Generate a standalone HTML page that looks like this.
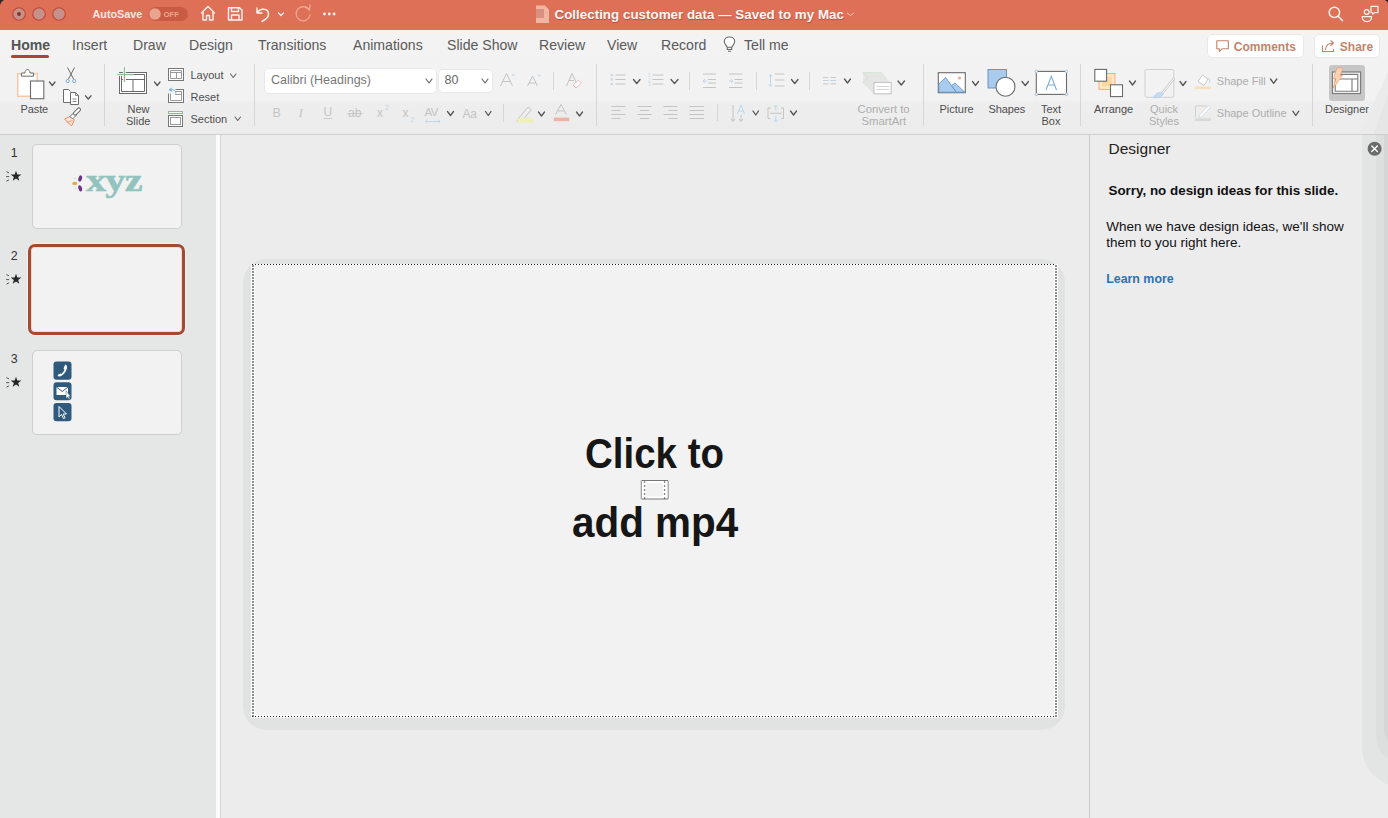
<!DOCTYPE html>
<html><head><meta charset="utf-8">
<style>
*{margin:0;padding:0;box-sizing:border-box}
html,body{width:1388px;height:818px;overflow:hidden;background:#ececec;font-family:"Liberation Sans",sans-serif}
.a{position:absolute}
.t{position:absolute;white-space:nowrap;line-height:1}
#title{left:0;top:0;width:1388px;height:30px;background:#de7058}
#strip{left:0;top:30px;width:1388px;height:3px;background:#fdefe9}
#ribbon{left:0;top:33px;width:1388px;height:101px;background:linear-gradient(#f3f3f3 0,#f2f2f2 67px,#eeeeee 69px,#ececec 101px)}
#rbb{left:0;top:134px;width:1388px;height:1px;background:#cfcfcf}
#pane{left:0;top:135px;width:216px;height:683px;background:#e5e7e6}
#split{left:216px;top:135px;width:5px;height:683px;background:#fbfbfb;border-right:1px solid #d4d4d4}
#canvas{left:221px;top:135px;width:868px;height:683px;background:#ececec}
#designer{left:1089px;top:135px;width:299px;height:683px;background:#ececec;border-left:1px solid #cbcbcb}
.tab{font-size:14.1px;color:#5a5a5a;top:37.6px}
.lbl{font-size:11px;color:#4e4e4e}
.dis{color:#adadad}
.sep{position:absolute;width:1px;background:#d6d6d6}
.chev{position:absolute;width:7px;height:5px}
</style></head><body>
<div id="title" class="a"></div>
<div id="strip" class="a"></div>
<div id="ribbon" class="a"></div>
<div id="rbb" class="a"></div>
<div id="pane" class="a"></div>
<div id="split" class="a"></div>
<div id="canvas" class="a"></div>
<div id="designer" class="a"></div>


<!-- title bar -->
<svg class="a" style="left:0;top:0" width="1388" height="30">
 <path d="M0 0 L4 0 Q0.8 1.5 0 5 Z" fill="#2a2a2a"/><path d="M1388 0 L1385 0 Q1387.5 1 1388 3 Z" fill="#1a1a1a"/>
 <g stroke="#c2442e" stroke-width="1.1" fill="#c6918a">
  <circle cx="19" cy="14" r="6.3"/><circle cx="39" cy="14" r="6.3"/><circle cx="59" cy="14" r="6.3"/>
 </g>
 <circle cx="19" cy="14" r="1.9" fill="#7e3328"/>
 <rect x="148.5" y="7" width="39.5" height="14" rx="7" fill="#c95a43"/>
 <circle cx="155" cy="14" r="6" fill="#eba58f" stroke="#d0624c" stroke-width="0.6"/>
 <g fill="none" stroke="#fff3ee" stroke-width="1.4" stroke-linejoin="round" stroke-linecap="round">
  <path d="M201.5 13 L208 6.6 L214.5 13 M203 11.5 V20 H206.5 V15.5 H209.5 V20 H213 V11.5"/>
  <path d="M228.5 7.8 H239.5 L242 10.3 V20 H228.5 Z M231.5 7.8 V11.5 H238.5 V7.8 M231.5 20 V15 H239 V20"/>
  <path d="M257 8 V13 H262 M257.5 12.5 C260 8 268 8 268.5 13.5 C269 17 265 20 262 21.5"/>
  <path d="M278.5 13 L281 15.5 L283.5 13" stroke-width="1.2"/>
 </g>
 <g fill="none" stroke="#f0a893" stroke-width="1.3" stroke-linecap="round">
  <path d="M309 10 A7 7 0 1 0 310 15"/><path d="M305.5 6.5 L309.5 9.5 L310 5"/>
 </g>
 <g fill="#fff3ee"><circle cx="324.5" cy="14" r="1.4"/><circle cx="329.3" cy="14" r="1.4"/><circle cx="334.1" cy="14" r="1.4"/></g>
 <g>
  <path d="M536 5.5 H545 L549 9.5 V23 H536 Z" fill="#f2b5a2"/>
  <rect x="536" y="9" width="8" height="9" fill="#d99080"/>
 </g>
 <path d="M847 13 L850.5 15.5 L854 13" fill="none" stroke="#f7c7b9" stroke-width="1"/>
 <g fill="none" stroke="#fff3ee" stroke-width="1.5" stroke-linecap="round">
  <circle cx="1334.4" cy="12.4" r="5.2"/><path d="M1338.2 16.3 L1342.4 20.6"/>
 </g>
 <g fill="none" stroke="#fff3ee" stroke-width="1.2" stroke-linejoin="round">
  <circle cx="1366.7" cy="12" r="2.4"/>
  <path d="M1362.2 16.6 H1371.6 C1371.6 20 1369.5 21.6 1366.9 21.6 C1364.3 21.6 1362.2 20 1362.2 16.6 Z"/>
  <path d="M1371 6.3 H1378 V12.6 H1374.6 L1372.6 14.2 V12.6 H1371 Z"/>
 </g>
</svg>
<div class="t" style="left:92.5px;top:9px;font-size:10.8px;font-weight:bold;color:#fde8e0">AutoSave</div>
<div class="t" style="left:163.5px;top:10.5px;font-size:7.8px;font-weight:bold;color:#efa590">OFF</div>
<div class="t" style="left:554.5px;top:8px;font-size:13.4px;font-weight:bold;color:#fff8f5;text-shadow:0.5px 1px 1px rgba(120,40,20,.45)">Collecting customer data — Saved to my Mac</div>



<!-- right edge bands -->
<div class="a" style="left:1362px;top:135px;width:60px;height:652px;background:#e3e4e4;border-radius:0 0 0 40px"></div>
<div class="a" style="left:1376px;top:135px;width:40px;height:630px;background:#dddede;border-radius:0 0 0 30px"></div>
<div class="a" style="left:1384px;top:135px;width:20px;height:614px;background:#d6d6d6;border-radius:0 0 0 20px"></div>

<!-- thumbnails -->
<div class="t" style="left:10.8px;top:146.6px;font-size:12.4px;color:#333">1</div>
<div class="t" style="left:10.8px;top:249.6px;font-size:12.4px;color:#333">2</div>
<div class="t" style="left:10.8px;top:352.6px;font-size:12.4px;color:#333">3</div>
<svg class="a" style="left:0;top:135px" width="216" height="300">
 <g id="st">
  <path d="M16.00 35.70 L17.32 39.48 L21.33 39.57 L18.14 42.00 L19.29 45.83 L16.00 43.55 L12.71 45.83 L13.86 42.00 L10.67 39.57 L14.68 39.48 Z" fill="#262626"/>
  <path d="M6.4 36.6 L9 37.9 M6.1 41.6 H9.2 M6.4 46.2 L9 44.8" stroke="#444" stroke-width="0.9" fill="none"/>
 </g>
 <use href="#st" y="103"/>
 <use href="#st" y="206"/>
</svg>
<div class="a" style="left:31.5px;top:144.3px;width:150px;height:84.5px;background:#f2f2f2;border:1px solid #cfcfcf;border-radius:5px"></div>
<div class="a" style="left:28.2px;top:244.2px;width:156.5px;height:91px;background:#f2f2f2;border:3px solid #a44a34;border-radius:7px;box-shadow:inset 0 0 0 1px #fcd6c6,0 0 0 1px rgba(245,245,245,.6)"></div>
<div class="a" style="left:31.5px;top:350.3px;width:150px;height:84.5px;background:#f2f2f2;border:1px solid #cfcfcf;border-radius:5px"></div>
<!-- xyz logo -->
<div class="t" style="left:86px;top:164.8px;font-family:'Liberation Serif',serif;font-weight:bold;font-size:31px;color:#93c3bf;letter-spacing:-0.6px;-webkit-text-stroke:0.5px #93c3bf;transform-origin:0 0;transform:scaleX(1.3)">xyz</div>
<svg class="a" style="left:70px;top:173px" width="16" height="22">
 <ellipse cx="10.2" cy="5.5" rx="1.8" ry="3.2" fill="#6a3585" transform="rotate(15 10.2 5.5)"/>
 <ellipse cx="10.2" cy="15.3" rx="1.8" ry="3.2" fill="#6a3585" transform="rotate(-15 10.2 15.3)"/>
 <ellipse cx="4.8" cy="10.4" rx="2.6" ry="1.6" fill="#e8a93c"/>
 <circle cx="5.2" cy="5.5" r="0.8" fill="#b8d8d4"/><circle cx="5.2" cy="15.5" r="0.8" fill="#b8d8d4"/>
</svg>
<!-- slide 3 icons -->
<svg class="a" style="left:53px;top:361px" width="20" height="62">
 <rect x="0.5" y="0.5" width="18" height="18.3" rx="3" fill="#2f5a7e"/>
 <rect x="0.5" y="21.3" width="18" height="18" rx="3" fill="#2f5a7e"/>
 <rect x="0.5" y="42" width="18" height="18.3" rx="3" fill="#2f5a7e"/>
 <path d="M12.5 3.5 C14.5 4.5 14.5 7 13 10 C11 13.5 8.5 15.5 5.5 15.5 L4.5 14 L7.5 12.5 L8.5 13 C10 11.5 11 10 11.5 8.5 L10.5 7.5 L12 4 Z" fill="#fff"/>
 <rect x="3.5" y="26" width="11.5" height="8" fill="#fff"/>
 <path d="M3.5 26 L9.25 30.5 L15 26" fill="none" stroke="#2f5a7e" stroke-width="1"/>
 <path d="M13 30 L13 37.5 L14.5 36 L16 38.5 L17 38 L15.8 35.5 L17.8 35.5 Z" fill="#fff" stroke="#2f5a7e" stroke-width="0.5"/>
 <path d="M6 45.5 L6 56 L8.5 53.5 L10.5 57.5 L12 56.8 L10.2 53 L13.5 53 Z" fill="none" stroke="#fff" stroke-width="1"/>
</svg>

<!-- slide -->
<div class="a" style="left:243px;top:259px;width:822px;height:470.5px;background:#e1e2e2;border-radius:24px"></div>
<svg class="a" style="left:250px;top:263px" width="810" height="456">
 <rect x="1" y="1" width="807" height="454" fill="#f2f2f2"/>
 <rect x="1" y="1" width="4" height="454" fill="#fff"/>
 <rect x="804" y="1" width="4" height="454" fill="#fff"/>
 <rect x="1" y="1" width="807" height="1" fill="#fff"/>
 <rect x="1" y="452" width="807" height="2" fill="#fff"/>
 <path d="M3 2 V454 M806 2 V454" stroke="#8f8f8f" stroke-width="2" stroke-dasharray="2 1"/>
 <path d="M2 1.5 H806 M2 453.5 H806" stroke="#1e1e1e" stroke-width="1" stroke-dasharray="1 2"/>
</svg>
<div class="t" style="left:585px;top:431.5px;font-size:43px;font-weight:bold;color:#161616;transform-origin:0 0;transform:scaleX(0.895)">Click to</div>
<div class="t" style="left:571.6px;top:501px;font-size:43px;font-weight:bold;color:#161616;transform-origin:0 0;transform:scaleX(0.94)">add mp4</div>
<svg class="a" style="left:640px;top:479px" width="30" height="22">
 <rect x="1" y="1" width="27.5" height="19.3" fill="#fff"/>
 <rect x="5.5" y="4" width="17.5" height="13.5" fill="#f2f2f2"/>
 <path d="M1.5 1.5 H28" stroke="#777" stroke-width="1"/>
 <path d="M1.5 20 H28" stroke="#777" stroke-width="1"/>
 <path d="M1.3 1.5 V20 M28.2 1.5 V20" stroke="#9d9d9d" stroke-width="1.2"/>
 <g fill="#555"><rect x="3.9" y="2.3" width="1.3" height="1.4"/><rect x="3.9" y="6.3" width="1.3" height="1.4"/><rect x="3.9" y="10.3" width="1.3" height="1.4"/><rect x="3.9" y="14.3" width="1.3" height="1.4"/><rect x="3.9" y="18.4" width="1.3" height="1.4"/>
 <rect x="23.9" y="2.3" width="1.3" height="1.4"/><rect x="23.9" y="6.3" width="1.3" height="1.4"/><rect x="23.9" y="10.3" width="1.3" height="1.4"/><rect x="23.9" y="14.3" width="1.3" height="1.4"/><rect x="23.9" y="18.4" width="1.3" height="1.4"/></g>
</svg>

<!-- designer pane -->
<div class="t" style="left:1108.5px;top:141.3px;font-size:15.5px;color:#222">Designer</div>
<div class="t" style="left:1108.5px;top:184.1px;font-size:13.4px;font-weight:bold;color:#111">Sorry, no design ideas for this slide.</div>
<div class="t" style="left:1106.2px;top:219.6px;font-size:13.5px;color:#111">When we have design ideas, we'll show</div>
<div class="t" style="left:1106.2px;top:235.8px;font-size:13.5px;color:#111">them to you right here.</div>
<div class="t" style="left:1106.2px;top:273.2px;font-size:12.4px;font-weight:bold;color:#2b72b5">Learn more</div>
<svg class="a" style="left:1366px;top:140px" width="18" height="18">
 <circle cx="8.6" cy="8.7" r="7" fill="#6b6b6b"/>
 <path d="M5.8 5.9 L11.4 11.5 M11.4 5.9 L5.8 11.5" stroke="#fff" stroke-width="1.4" stroke-linecap="round"/>
</svg>

<svg class="a" style="left:1340px;top:60px" width="48" height="74">
 <path d="M48 12 C40 30 28 55 20 74 H48 Z" fill="#ebebeb"/>
 <path d="M48 34 C44 46 38 62 34 74 H48 Z" fill="#e6e6e6"/>
</svg>
<!-- ribbon separators -->
<div class="sep" style="left:104px;top:64px;height:62px"></div>
<div class="sep" style="left:254px;top:64px;height:62px"></div>
<div class="sep" style="left:596px;top:64px;height:62px"></div>
<div class="sep" style="left:923px;top:64px;height:62px"></div>
<div class="sep" style="left:1080px;top:64px;height:62px"></div>
<div class="sep" style="left:1312px;top:64px;height:62px"></div>
<div class="sep" style="left:553px;top:72px;height:18px"></div>
<div class="sep" style="left:503px;top:104px;height:18px"></div>
<div class="sep" style="left:689px;top:72px;height:18px"></div>
<div class="sep" style="left:756px;top:72px;height:18px"></div>
<div class="sep" style="left:809px;top:72px;height:18px"></div>
<div class="sep" style="left:717px;top:104px;height:17px"></div>

<!-- labels -->
<div class="t lbl" style="left:20.5px;top:103.5px;letter-spacing:-0.1px">Paste</div>
<div class="t lbl" style="left:127.5px;top:103.5px">New</div>
<div class="t lbl" style="left:126px;top:115.5px">Slide</div>
<div class="t lbl" style="left:190.5px;top:69.9px">Layout</div>
<div class="t lbl" style="left:190.5px;top:91.8px">Reset</div>
<div class="t lbl" style="left:190.5px;top:113.7px">Section</div>
<div class="t lbl dis" style="left:857.5px;top:103.5px;font-size:11.3px">Convert to</div>
<div class="t lbl dis" style="left:861.5px;top:115.5px;font-size:11.3px">SmartArt</div>
<div class="t lbl" style="left:939.5px;top:103.5px">Picture</div>
<div class="t lbl" style="left:988.5px;top:103.5px;letter-spacing:-0.1px">Shapes</div>
<div class="t lbl" style="left:1041px;top:103.5px">Text</div>
<div class="t lbl" style="left:1041.5px;top:115.5px">Box</div>
<div class="t lbl" style="left:1094px;top:103.5px;color:#4a4a4a">Arrange</div>
<div class="t lbl dis" style="left:1150px;top:103.5px">Quick</div>
<div class="t lbl dis" style="left:1149px;top:115.5px">Styles</div>
<div class="t lbl dis" style="left:1216.8px;top:75.7px">Shape Fill</div>
<div class="t lbl dis" style="left:1216.8px;top:107.5px">Shape Outline</div>
<div class="t lbl" style="left:1325px;top:103.5px;color:#4f4f4f">Designer</div>

<!-- font boxes -->
<div class="a" style="left:264.5px;top:69px;width:171.5px;height:23.5px;background:#fff;border-radius:4px;box-shadow:0 0 0 0.5px #e0e0e0"></div>
<div class="a" style="left:439px;top:69.5px;width:53px;height:22.5px;background:#fff;border-radius:4px;box-shadow:0 0 0 0.5px #e0e0e0"></div>
<div class="t" style="left:271px;top:74.3px;font-size:12.5px;color:#777">Calibri (Headings)</div>
<div class="t" style="left:444.5px;top:74.3px;font-size:12.5px;color:#666">80</div>

<!-- comments / share -->
<div class="a" style="left:1208px;top:35px;width:94.5px;height:22px;background:#fff;border-radius:4px;box-shadow:0 0 0 0.5px #dedede"></div>
<div class="a" style="left:1314.5px;top:35px;width:64.5px;height:22px;background:#fff;border-radius:4px;box-shadow:0 0 0 0.5px #dedede"></div>
<div class="t" style="left:1233.8px;top:40.8px;font-size:12px;font-weight:bold;color:#c6826b">Comments</div>
<div class="t" style="left:1339.8px;top:40.8px;font-size:12px;font-weight:bold;color:#c6826b">Share</div>
<div class="a" style="left:1328.7px;top:65px;width:36px;height:35.7px;background:#c6c6c6;border-radius:3px"></div>

<!-- icons1 -->
<svg class="a" style="left:0;top:0" width="1388" height="134">
<rect x="17.5" y="73.5" width="20" height="23" fill="#fff7f0" stroke="#f4c6a4" stroke-width="1"/>
<rect x="18.5" y="74.5" width="18" height="21" fill="#fff" stroke="#f8dfcc" stroke-width="0.8"/>
<path d="M21.5 76.2 V73 H25 C25 68.5 30 68.5 30 73 H33.5 V76.2 Z" fill="#fff" stroke="#6b6b6b" stroke-width="1"/>
<rect x="30.5" y="81" width="13.3" height="17.7" fill="#fff" stroke="#6b6b6b" stroke-width="1.1"/>
<path d="M49.5 82 L52.25 85.5 L55 82" fill="none" stroke="#555" stroke-width="1.3" stroke-linecap="round" stroke-linejoin="round"/>
<path d="M67.5 67.5 L73.5 79 M74.5 67.5 L68.5 79" stroke="#6b6b6b" stroke-width="1" fill="none"/>
<circle cx="67.8" cy="81" r="1.6" fill="none" stroke="#6ea6d8" stroke-width="0.9"/><circle cx="74.2" cy="81" r="1.6" fill="none" stroke="#6ea6d8" stroke-width="0.9"/>
<path d="M70.5 102.5 H63.5 V89.5 H68.5 L70.5 91.5" fill="#fff" stroke="#6b6b6b" stroke-width="1"/>
<path d="M70.5 92.5 H75.5 L78.5 95.5 V104.5 H70.5 Z" fill="#fff" stroke="#6b6b6b" stroke-width="1"/>
<path d="M75.5 92.5 V95.5 H78.5" fill="none" stroke="#6b6b6b" stroke-width="0.8"/>
<path d="M72.5 99 H76.5 M72.5 101.5 H76.5" stroke="#6b6b6b" stroke-width="0.8"/>
<path d="M85.5 95.8 L88.25 99 L91 95.8" fill="none" stroke="#555" stroke-width="1.3" stroke-linecap="round" stroke-linejoin="round"/>
<path d="M64.5 119 L70.5 116.2 L74.3 120 L71.5 126 Z" fill="#fde6d6" stroke="#ee8a60" stroke-width="1" stroke-linejoin="round"/>
<path d="M67 122.5 L72.5 120.5" stroke="#ee8a60" stroke-width="0.8"/>
<path d="M70 116.5 L74 112.5 L76.5 115 L72.5 119 Z" fill="#fff" stroke="#6b6b6b" stroke-width="1" stroke-linejoin="round"/>
<rect x="-1.6" y="-4.2" width="3.2" height="8.4" rx="1.4" fill="#fff" stroke="#6b6b6b" stroke-width="1" transform="translate(77 111.5) rotate(45)"/>
<rect x="119.5" y="72.5" width="27" height="21" fill="#fff" stroke="#6b6b6b" stroke-width="1"/>
<path d="M121.5 91.5 V74.5 H144.5 V91.5 Z M121.5 79.5 H144.5 M133 79.5 V91.5" fill="none" stroke="#6b6b6b" stroke-width="1"/>
<rect x="116.5" y="66.5" width="17" height="16" fill="#f3f3f3" opacity="0"/>
<path d="M117.3 74.6 H133.4 M124.4 67.1 V82" stroke="#f3f3f3" stroke-width="3"/>
<path d="M117.3 74.6 H133.4 M124.4 67.1 V82" stroke="#7fbf7f" stroke-width="1"/>
<path d="M154.5 82 L157.25 85.5 L160 82" fill="none" stroke="#555" stroke-width="1.3" stroke-linecap="round" stroke-linejoin="round"/>
<rect x="168.5" y="68.5" width="15" height="12" fill="#fff" stroke="#777" stroke-width="1"/>
<path d="M170.5 78.5 V70.5 H181.5 V78.5 Z M170.5 72.5 H181.5 M176.5 72.5 V78.5" fill="none" stroke="#9a9a9a" stroke-width="1"/>
<path d="M230.5 74 L233.25 77.5 L236 74" fill="none" stroke="#666" stroke-width="1.1" stroke-linecap="round" stroke-linejoin="round"/>
<rect x="168.5" y="89.5" width="15" height="13" fill="#fff" stroke="#777" stroke-width="1"/>
<path d="M170.5 100.5 V91.5 H181.5 V100.5 Z M175.5 94.5 H181.5" fill="none" stroke="#9a9a9a" stroke-width="1"/>
<rect x="167.5" y="88" width="8" height="5.5" fill="#f3f3f3"/><path d="M168.6 89.8 L171.6 87.6 L171.6 92 Z" fill="#7aaedc"/><path d="M171 89.8 C174.5 89.3 176.5 91 175.6 94.8" fill="none" stroke="#7aaedc" stroke-width="1"/>
<rect x="168.5" y="111.5" width="14" height="2" fill="#fff" stroke="#aaa" stroke-width="1"/>
<path d="M168 113.5 H183" stroke="#86c086" stroke-width="1"/>
<rect x="168.5" y="115.5" width="14" height="11" fill="#fff" stroke="#777" stroke-width="1"/>
<rect x="170.5" y="117.5" width="10" height="7" fill="none" stroke="#9a9a9a" stroke-width="1"/>
<path d="M235 117 L237.75 120.5 L240.5 117" fill="none" stroke="#666" stroke-width="1.1" stroke-linecap="round" stroke-linejoin="round"/>
<path d="M426 79 L429.0 83 L432 79" fill="none" stroke="#666" stroke-width="1.1" stroke-linecap="round" stroke-linejoin="round"/>
<path d="M482 79 L485.0 83 L488 79" fill="none" stroke="#666" stroke-width="1.1" stroke-linecap="round" stroke-linejoin="round"/>
<path d="M500.5 86 L506.5 73.5 L512.5 86 M502.5 81.5 H510.5" fill="none" stroke="#c2c2c2" stroke-width="1"/>
<path d="M511.8 76 L513.5 74 L515.2 76" fill="none" stroke="#b9d5ea" stroke-width="0.9"/>
<path d="M527.5 86 L532.5 76 L537.5 86 M529 83 H536" fill="none" stroke="#c2c2c2" stroke-width="1"/>
<path d="M537.5 74.5 L539.2 76.3 L541 74.5" fill="none" stroke="#b9d5ea" stroke-width="0.9"/>
<path d="M566.5 86 L572 73.5 L577 84 M569 80.5 H574" fill="none" stroke="#c2c2c2" stroke-width="1"/>
<path d="M573 85 L578.5 80 L581.5 83 L576 88 Z" fill="#fff" stroke="#f2b8b8" stroke-width="1"/>
</svg>
<!-- /icons1 -->
<!-- icons2 -->
<svg class="a" style="left:0;top:0" width="1388" height="134">
<text x="272.5" y="117.3" font-family="Liberation Sans" font-size="12.5" fill="#c4c4c4">B</text>
<text x="298.5" y="117.3" font-family="Liberation Serif" font-style="italic" font-size="13" fill="#c4c4c4">I</text>
<text x="323.5" y="116.3" font-family="Liberation Sans" font-size="12" fill="#c4c4c4">U</text>
<path d="M323.6 118.6 H332" stroke="#c4c4c4" stroke-width="0.9"/>
<text x="348" y="117.3" font-family="Liberation Sans" font-size="12" fill="#c4c4c4">ab</text>
<path d="M346.5 113.6 H362.8" stroke="#c4c4c4" stroke-width="0.9"/>
<text x="377" y="117.3" font-family="Liberation Sans" font-size="12" fill="#c4c4c4">x</text>
<text x="385" y="109.5" font-family="Liberation Sans" font-size="6.5" fill="#b9d5ea">2</text>
<text x="402.5" y="117.3" font-family="Liberation Sans" font-size="12" fill="#c4c4c4">x</text>
<text x="410.5" y="121.5" font-family="Liberation Sans" font-size="6.5" fill="#b9d5ea">2</text>
<text x="424.5" y="115.8" font-family="Liberation Sans" font-size="11.5" fill="#c4c4c4" letter-spacing="-0.5">AV</text>
<path d="M425.5 121.5 H440 M427.5 119.6 L425.5 121.5 L427.5 123.4 M438 119.6 L440 121.5 L438 123.4" fill="none" stroke="#b9d5ea" stroke-width="0.9"/>
<path d="M447.5 111.5 L450.5 115.5 L453.5 111.5" fill="none" stroke="#555" stroke-width="1.3" stroke-linecap="round" stroke-linejoin="round"/>
<text x="462.5" y="117.7" font-family="Liberation Sans" font-size="12" fill="#c4c4c4" letter-spacing="-0.3">Aa</text>
<path d="M485.5 111.5 L488.25 115.5 L491 111.5" fill="none" stroke="#555" stroke-width="1.3" stroke-linecap="round" stroke-linejoin="round"/>
<path d="M518.5 118.5 L528 107 L531.3 109.8 L522 121 Z M518.5 118.5 L517 121.5 L520 121" fill="none" stroke="#c4c4c4" stroke-width="1"/>
<rect x="517.5" y="118" width="16.5" height="4.8" rx="1.5" fill="#f0efb8"/>
<path d="M538.5 112 L541.5 116 L544.5 112" fill="none" stroke="#555" stroke-width="1.3" stroke-linecap="round" stroke-linejoin="round"/>
<path d="M555.5 114.5 L561 104.5 L566.5 114.5 M557.5 111 H564.5" fill="none" stroke="#c4c4c4" stroke-width="1"/>
<rect x="553.8" y="117.6" width="15.4" height="3.6" fill="#efb1a3"/>
<path d="M576.5 112 L579.5 116 L582.5 112" fill="none" stroke="#555" stroke-width="1.3" stroke-linecap="round" stroke-linejoin="round"/>
<rect x="610.5" y="73.8" width="2.4" height="2.4" fill="#c8dcec"/>
<path d="M615.5 75 H625.5" stroke="#c4c4c4" stroke-width="1"/>
<rect x="610.5" y="78.3" width="2.4" height="2.4" fill="#c8dcec"/>
<path d="M615.5 79.5 H625.5" stroke="#c4c4c4" stroke-width="1"/>
<rect x="610.5" y="82.8" width="2.4" height="2.4" fill="#c8dcec"/>
<path d="M615.5 84 H625.5" stroke="#c4c4c4" stroke-width="1"/>
<path d="M633.5 79.5 L636.75 83.5 L640 79.5" fill="none" stroke="#555" stroke-width="1.3" stroke-linecap="round" stroke-linejoin="round"/>
<text x="648" y="77" font-family="Liberation Sans" font-size="5" fill="#c8dcec">1</text>
<path d="M652.5 75 H663.5" stroke="#c4c4c4" stroke-width="1"/>
<text x="648" y="81.5" font-family="Liberation Sans" font-size="5" fill="#c8dcec">2</text>
<path d="M652.5 79.5 H663.5" stroke="#c4c4c4" stroke-width="1"/>
<text x="648" y="86" font-family="Liberation Sans" font-size="5" fill="#c8dcec">3</text>
<path d="M652.5 84 H663.5" stroke="#c4c4c4" stroke-width="1"/>
<path d="M671 79.5 L674.5 83.5 L678 79.5" fill="none" stroke="#555" stroke-width="1.3" stroke-linecap="round" stroke-linejoin="round"/>
<path d="M703 74 H716 M708 79.5 H716 M708 83 H716 M703 87.5 H716" stroke="#c4c4c4" stroke-width="1"/>
<path d="M707 81 H703 M705 79 L703 81 L705 83" fill="none" stroke="#b9d5ea" stroke-width="0.9"/>
<path d="M729 74 H742.4 M734.5 79.5 H742.4 M734.5 83 H742.4 M729 87.5 H742.4" stroke="#c4c4c4" stroke-width="1"/>
<path d="M729 81 H733 M731 79 L733 81 L731 83" fill="none" stroke="#b9d5ea" stroke-width="0.9"/>
<path d="M775 74 H784.5 M775 80 H784.5 M775 86 H784.5" stroke="#c4c4c4" stroke-width="1"/>
<path d="M770.5 75 V86 M768.8 76.5 L770.5 74.5 L772.2 76.5 M768.8 84.5 L770.5 86.5 L772.2 84.5" fill="none" stroke="#b9d5ea" stroke-width="0.9"/>
<path d="M791.5 79.5 L794.75 83.5 L798 79.5" fill="none" stroke="#555" stroke-width="1.3" stroke-linecap="round" stroke-linejoin="round"/>
<path d="M611.5 106.5 H625.5" stroke="#c4c4c4" stroke-width="1"/><path d="M611.5 110.5 H620.5" stroke="#c4c4c4" stroke-width="1"/><path d="M611.5 114.5 H625.5" stroke="#c4c4c4" stroke-width="1"/><path d="M611.5 118.5 H620.5" stroke="#c4c4c4" stroke-width="1"/>
<path d="M637.5 106.5 H651.5" stroke="#c4c4c4" stroke-width="1"/><path d="M640.0 110.5 H649.0" stroke="#c4c4c4" stroke-width="1"/><path d="M637.5 114.5 H651.5" stroke="#c4c4c4" stroke-width="1"/><path d="M640.0 118.5 H649.0" stroke="#c4c4c4" stroke-width="1"/>
<path d="M663.5 106.5 H677.5" stroke="#c4c4c4" stroke-width="1"/><path d="M668.5 110.5 H677.5" stroke="#c4c4c4" stroke-width="1"/><path d="M663.5 114.5 H677.5" stroke="#c4c4c4" stroke-width="1"/><path d="M668.5 118.5 H677.5" stroke="#c4c4c4" stroke-width="1"/>
<path d="M689.5 106.5 H704.0" stroke="#c4c4c4" stroke-width="1"/><path d="M689.5 110.5 H704.0" stroke="#c4c4c4" stroke-width="1"/><path d="M689.5 114.5 H704.0" stroke="#c4c4c4" stroke-width="1"/><path d="M689.5 118.5 H704.0" stroke="#c4c4c4" stroke-width="1"/>
<path d="M733 105 V121 M731 119 L733 121.5 L735 119 M741 115 V121 M739 119 L741 121.5 L743 119" fill="none" stroke="#c4c4c4" stroke-width="1"/>
<path d="M737.5 114 L741 105 L744.5 114 M738.8 111 H743.2" fill="none" stroke="#b9d5ea" stroke-width="0.9"/>
<path d="M753 111 L755.75 115 L758.5 111" fill="none" stroke="#555" stroke-width="1.3" stroke-linecap="round" stroke-linejoin="round"/>
<path d="M770.5 108 H768 V118.5 H770.5 M781 108 H783.5 V118.5 H781 M770 113.3 H781.5" fill="none" stroke="#c4c4c4" stroke-width="1"/>
<path d="M775.8 105 V110.5 M774 107 L775.8 105 L777.6 107 M775.8 116 V122 M774 120 L775.8 122 L777.6 120" fill="none" stroke="#b9d5ea" stroke-width="0.9"/>
<path d="M790.5 111 L793.5 115 L796.5 111" fill="none" stroke="#555" stroke-width="1.3" stroke-linecap="round" stroke-linejoin="round"/>
<path d="M823 77.5 H828.5 M823 80.5 H828.5 M823 83.8 H828.5 M830.5 77.5 H836 M830.5 80.5 H836 M830.5 83.8 H836" stroke="#c4c4c4" stroke-width="0.9"/>
<path d="M823 80.5 H828.5 M830.5 80.5 H836" stroke="#b9d5ea" stroke-width="0.9"/>
<path d="M844.5 79 L847.5 83 L850.5 79" fill="none" stroke="#555" stroke-width="1.3" stroke-linecap="round" stroke-linejoin="round"/>
<path d="M863 72.5 H881.5 L890 83 H874 V93.5 L863 82.5 L868 77.5 Z" fill="#e4e6e4" stroke="#cfe2cf" stroke-width="0.6"/>
<path d="M863 82.5 L868 77.5 L863 72.5" fill="#e4e6e4" stroke="#d5d5d5" stroke-width="0.6"/>
<rect x="874" y="82.5" width="17.2" height="11.3" fill="#fff" stroke="#c8c8c8" stroke-width="1.2"/>
<path d="M876.5 86.5 H889 M876.5 89.5 H889" stroke="#cfcfcf" stroke-width="0.9"/>
<path d="M898 81 L901.25 85 L904.5 81" fill="none" stroke="#555" stroke-width="1.3" stroke-linecap="round" stroke-linejoin="round"/>
<rect x="938.3" y="72.7" width="27" height="20" fill="#fff" stroke="#6b6b6b" stroke-width="1.1"/>
<path d="M938.8 84 L945.5 77.5 L956.5 92.2 H938.8 Z" fill="#a9cbee" stroke="#5b8fc3" stroke-width="0.8"/>
<path d="M951.5 85.6 L955 83 L964.8 92.2 H956.5 Z" fill="#a9cbee" stroke="#5b8fc3" stroke-width="0.8"/>
<circle cx="959.5" cy="78" r="1.6" fill="#f0a98e"/>
<path d="M972.5 81.5 L975.5 85.5 L978.5 81.5" fill="none" stroke="#555" stroke-width="1.3" stroke-linecap="round" stroke-linejoin="round"/>
<rect x="988" y="69.5" width="18.5" height="18.5" fill="#a9cbee" stroke="#5b8fc3" stroke-width="0.9"/>
<circle cx="1005.5" cy="86.7" r="9.5" fill="#fff" stroke="#6b6b6b" stroke-width="1.1"/>
<path d="M1022 81.5 L1025.25 85.5 L1028.5 81.5" fill="none" stroke="#555" stroke-width="1.3" stroke-linecap="round" stroke-linejoin="round"/>
<rect x="1036.3" y="71.4" width="30.2" height="23" fill="#fff" stroke="#6b6b6b" stroke-width="1.1"/>
<g fill="#fff" stroke="#8db8e0" stroke-width="0.8"><circle cx="1036.3" cy="71.4" r="1.3"/><circle cx="1066.5" cy="71.4" r="1.3"/><circle cx="1036.3" cy="94.4" r="1.3"/><circle cx="1066.5" cy="94.4" r="1.3"/></g>
<path d="M1046 90 L1051.3 76.3 L1056.5 90 M1048 85 H1054.5" fill="none" stroke="#7aaede" stroke-width="1.1"/>
<rect x="1099" y="73.5" width="16" height="16" fill="#fde8c8" stroke="#f5b07e" stroke-width="1"/>
<rect x="1102" y="76.5" width="10" height="10" fill="#fbd9a0"/>
<rect x="1094.8" y="69.4" width="11.8" height="11.8" fill="#fff" stroke="#6b6b6b" stroke-width="1.1"/>
<rect x="1110.5" y="84.8" width="12" height="11.8" fill="#fff" stroke="#6b6b6b" stroke-width="1.1"/>
<path d="M1129.5 81 L1132.5 85 L1135.5 81" fill="none" stroke="#555" stroke-width="1.3" stroke-linecap="round" stroke-linejoin="round"/>
<rect x="1145" y="69.5" width="28.8" height="27.8" rx="1.5" fill="none" stroke="#d0d0d0" stroke-width="1"/>
<path d="M1173.5 79 L1162 93.5" stroke="#c9c9c9" stroke-width="2.6" stroke-linecap="round"/>
<path d="M1173.5 79 L1162 93.5" stroke="#f3f3f3" stroke-width="1.2" stroke-linecap="round"/>
<path d="M1153.5 97.5 C1155 94 1158 92 1161.5 92.5 L1163 94 C1162 97 1158 98.5 1153.5 97.5 Z" fill="#c3dcf2" stroke="#a9cbee" stroke-width="0.6"/>
<path d="M1180 81.5 L1183.0 85.5 L1186 81.5" fill="none" stroke="#555" stroke-width="1.3" stroke-linecap="round" stroke-linejoin="round"/>
<path d="M1198 81.5 L1202.5 75 L1208 79 L1204 85.5 Z" fill="#fff" stroke="#c8c8c8" stroke-width="1"/>
<path d="M1208.5 78 C1210 80 1210 82 1209.5 83" fill="none" stroke="#b9d5ea" stroke-width="0.9"/>
<rect x="1194.8" y="86.5" width="16.2" height="2.6" fill="#f8dfb8"/>
<path d="M1270.5 79 L1273.65 83.3 L1276.8 79" fill="none" stroke="#555" stroke-width="1.3" stroke-linecap="round" stroke-linejoin="round"/>
<path d="M1195.5 117 V106 H1207" fill="none" stroke="#d0d0d0" stroke-width="1"/>
<path d="M1199.5 115 L1208.5 105.5 L1210.5 107.5 L1201.5 117 L1199 117.5 Z" fill="#fff" stroke="#c8d8e8" stroke-width="0.8"/>
<rect x="1194.8" y="118.3" width="16.2" height="2.8" fill="#d5dcd5"/>
<path d="M1292.8 111.2 L1295.8 115.5 L1298.8 111.2" fill="none" stroke="#555" stroke-width="1.3" stroke-linecap="round" stroke-linejoin="round"/>
<rect x="1332.5" y="72" width="28" height="21.5" fill="#fff" stroke="#7a7a7a" stroke-width="1.2"/>
<path d="M1335.2 91.2 V74.4 H1357.8 V91.2 Z M1335.2 79 H1357.8 M1352 79 V91.2" fill="none" stroke="#7a7a7a" stroke-width="1.1"/>
<path d="M1337 68 L1343 68 L1339.8 75.5 L1342.5 75.5 L1333 88.5 L1336 78.5 L1333.5 78.5 Z" fill="#fad2b4" stroke="#f2a072" stroke-width="0.7" stroke-linejoin="round"/>
<path d="M1216.8 40.7 H1228.3 V48.8 H1222 L1219.3 51.5 V48.8 H1216.8 Z" fill="none" stroke="#c6826b" stroke-width="1.1" stroke-linejoin="round"/>
<path d="M1322.5 45.5 V51.5 H1333.5 V49" fill="none" stroke="#c6826b" stroke-width="1.1" stroke-linejoin="round"/>
<path d="M1325.5 49.5 C1326 45 1329 43 1333 43 M1330.8 40.7 L1333.5 43 L1330.8 45.5" fill="none" stroke="#c6826b" stroke-width="1.1" stroke-linejoin="round" stroke-linecap="round"/>
</svg>
<!-- /icons2 -->
<!-- tabs -->
<div class="t tab" style="left:11px;color:#555;font-weight:bold">Home</div>
<div class="a" style="left:11px;top:55px;width:38px;height:3px;border-radius:2px;background:#b1442c"></div>
<div class="t tab" style="left:72px">Insert</div>
<div class="t tab" style="left:133px">Draw</div>
<div class="t tab" style="left:189px">Design</div>
<div class="t tab" style="left:258px">Transitions</div>
<div class="t tab" style="left:353px">Animations</div>
<div class="t tab" style="left:447px">Slide Show</div>
<div class="t tab" style="left:539px">Review</div>
<div class="t tab" style="left:607px">View</div>
<div class="t tab" style="left:661px">Record</div>
<svg class="a" style="left:720px;top:34px" width="20" height="20">
 <path d="M7.2 13.3 C6.5 11.3 4.3 10 4.3 7.6 C4.3 4.8 6.6 3 9.5 3 C12.4 3 14.7 4.8 14.7 7.6 C14.7 10 12.5 11.3 11.8 13.3 Z" fill="#fff" stroke="#6a6a6a" stroke-width="1.1" stroke-linejoin="round"/>
 <path d="M7.3 13.5 V15.5 H11.7 V13.5 M8 17.3 H11" fill="none" stroke="#6a6a6a" stroke-width="1.1"/>
</svg>
<div class="t tab" style="left:744px">Tell me</div>

</body></html>
